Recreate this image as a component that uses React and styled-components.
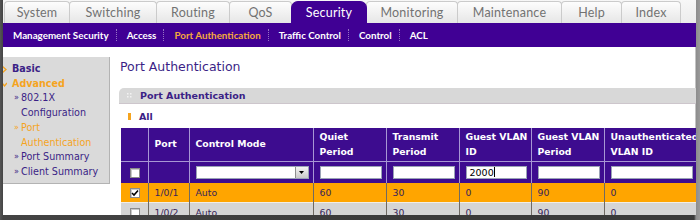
import React from 'react'
import styled, { createGlobalStyle } from 'styled-components'

const Global = createGlobalStyle`
  html, body { margin: 0; padding: 0; background: #fff; }
  #root { width: 700px; height: 220px; }
`

const NAV_PURPLE = '#400094'
const HEAD_PURPLE = '#3d0c8f'
const INK = '#3b1f86'
const ORANGE = '#f5a41f'

const Frame = styled.div`
  width: 700px;
  height: 220px;
  box-sizing: border-box;
  padding: 0 4px 5px 3px;
  background: linear-gradient(to right, #555 0, #444 3px, #3a3a3a 60%, #3a3a3a 694px, #8d8d8d 696px, #9a9a9a 100%);
  overflow: hidden;
`

const Screen = styled.div`
  width: 693px;
  height: 215px;
  background: #fff;
  overflow: hidden;
  display: flex;
  flex-direction: column;
  box-shadow: inset -1px 0 0 #c4c4c4;
`

const TabBar = styled.div`
  height: 23px;
  flex: none;
  display: flex;
  align-items: flex-end;
  padding-left: 1px;
  background: linear-gradient(#f7f7f7, #ececec);
`

const Tab = styled.div`
  width: ${p => p.w}px;
  height: 22px;
  box-sizing: border-box;
  margin-right: -1px;
  display: flex;
  align-items: center;
  justify-content: center;
  font-family: Lato, "Open Sans", sans-serif;
  font-size: 12.5px;
  letter-spacing: 0.2px;
  border: 1px solid ${p => (p.active ? NAV_PURPLE : '#cbcbcb')};
  border-bottom: none;
  border-radius: ${p => (p.active ? '7px 7px 0 0' : '4px 4px 0 0')};
  color: ${p => (p.active ? '#fff' : '#727272')};
  background: ${p => (p.active ? NAV_PURPLE : 'linear-gradient(#fdfdfd, #e6e6e6)')};
  position: relative;
  z-index: ${p => (p.active ? 1 : 0)};
`

const SubNav = styled.div`
  height: 24px;
  flex: none;
  display: flex;
  align-items: center;
  padding-left: 10px;
  background: ${NAV_PURPLE};
`

const NavLink = styled.span`
  font-family: Lato, "Open Sans", sans-serif;
  font-weight: 700;
  font-size: 9.8px;
  color: ${p => (p.current ? '#f7a93c' : '#fff')};
  white-space: nowrap;
`

const NavSep = styled.span`
  width: 0;
  height: 12px;
  border-left: 1px dotted rgba(255, 255, 255, 0.45);
  margin: 0 10px 0 7px;
`

const Body = styled.div`
  flex: 1;
  display: flex;
  min-height: 0;
`

const Sidebar = styled.div`
  width: 107px;
  flex: none;
  align-self: flex-start;
  margin-top: 10px;
  box-sizing: border-box;
  padding: 5px 0 3px;
  background: #dadada;
  border-right: 1px solid #b3b3b3;
  border-bottom: 1px solid #b3b3b3;
  font-family: "DejaVu Sans", Verdana, sans-serif;
  font-size: 9.6px;
  line-height: 14.7px;
`

const SideItem = styled.div`
  display: flex;
  align-items: center;
  padding-left: ${p => p.indent}px;
  color: ${p => (p.tone === 'orange' ? ORANGE : INK)};
  font-weight: ${p => (p.bold ? 700 : 400)};
  white-space: nowrap;
`

const Arrow = styled.svg`
  width: 5px;
  height: 7px;
  margin: 0 5px 0 -1px;
  flex: none;
`

const Bullet = styled.span`
  width: 7px;
  flex: none;
  font-size: 8px;
`

const Main = styled.div`
  flex: 1;
  min-width: 0;
  padding-left: 9px;
  overflow: hidden;
`

const Title = styled.h1`
  margin: 12px 0 0 1px;
  font-family: "DejaVu Sans", Verdana, sans-serif;
  font-weight: 400;
  font-size: 12.5px;
  line-height: 16px;
  color: ${INK};
`

const Panel = styled.div`
  margin-top: 13px;
  overflow: hidden;
`

const PanelHead = styled.div`
  height: 16px;
  display: flex;
  align-items: center;
  padding-left: 8px;
  background: #d8d8d8;
  border-radius: 5px 0 0 0;
  border-bottom: 1px solid #cdc6cc;
  box-sizing: border-box;
  font-family: "DejaVu Sans", Verdana, sans-serif;
  font-weight: 700;
  font-size: 9.5px;
  color: ${INK};
`

const Grip = styled.svg`
  width: 5px;
  height: 5px;
  margin-right: 8px;
  flex: none;
`

const AllRow = styled.div`
  height: 24px;
  display: flex;
  align-items: center;
  padding-left: 9px;
  font-family: "DejaVu Sans", Verdana, sans-serif;
  font-weight: 700;
  font-size: 9.5px;
  color: ${INK};
`

const AllMark = styled.span`
  width: 3px;
  height: 7px;
  background: ${ORANGE};
  margin-right: 8px;
`

const Table = styled.table`
  border-collapse: collapse;
  table-layout: fixed;
  width: 600px;
  margin-left: 2px;
  font-family: "DejaVu Sans", Verdana, sans-serif;
  font-size: 9.3px;
`

const HeadCell = styled.th`
  height: 33px;
  padding: 0 5px 0 6px;
  background: ${HEAD_PURPLE};
  color: #fff;
  font-weight: 700;
  text-align: left;
  line-height: 14.5px;
  border-left: 1px solid #a797d4;
  white-space: nowrap;
  overflow: hidden;
  &:first-child { border-left: none; }
`

const FilterCell = styled.td`
  height: 20px;
  padding: 0 4px 0 6px;
  background: ${HEAD_PURPLE};
  border-left: 1px solid #a797d4;
  border-top: 1px solid #a797d4;
  text-align: ${p => (p.center ? 'center' : 'left')};
  &:first-child { border-left: none; padding: 0 0 0 2px; }
`

const DataRow = styled.tr`
  background: ${p => (p.selected ? '#ffa500' : '#d5d5d5')};
  color: #35245a;
`

const DataCell = styled.td`
  height: 19px;
  padding: 0 4px 0 6px;
  border-left: 1px solid #6f6a63;
  border-top: 1px solid ${p => (p.first ? HEAD_PURPLE : '#f1ede6')};
  text-align: ${p => (p.center ? 'center' : 'left')};
  white-space: nowrap;
  &:first-child { border-left: none; padding: 0 0 0 2px; }
`

const Box = styled.span`
  display: inline-block;
  vertical-align: middle;
  width: 10px;
  height: 10px;
  box-sizing: border-box;
  background: #fff;
  border: 1px solid #8b8b8b;
  box-shadow: inset 1px 1px 0 #c9c9c9;
  position: relative;
`

const Field = styled.div`
  height: 13px;
  width: 100%;
  box-sizing: border-box;
  display: flex;
  align-items: center;
  background: #fff;
  border: 1px solid #9aa3b6;
  padding-left: ${p => (p.text ? 3 : 0)}px;
  font-size: 9.5px;
  color: #000;
`

const DropBtn = styled.span`
  margin-left: auto;
  width: 13px;
  height: 100%;
  box-sizing: border-box;
  display: flex;
  align-items: center;
  justify-content: center;
  background: linear-gradient(#f4f4f4, #c9c9c9);
  border-left: 1px solid #8e8e8e;
`

const Caret = styled.span`
  width: 1px;
  height: 10px;
  background: #000;
`

const Checkbox = ({ checked }) => (
  <Box>
    {checked && (
      <svg width="8" height="8" viewBox="0 0 8 8" style={{ position: 'absolute', left: 0, top: 0 }}>
        <path d="M1 4 L3 6 L7 1.5" fill="none" stroke="#000" strokeWidth="1.6" />
      </svg>
    )}
  </Box>
)

const tabs = [
  ['System', 66],
  ['Switching', 88],
  ['Routing', 74],
  ['QoS', 63],
  ['Security', 76, true],
  ['Monitoring', 92],
  ['Maintenance', 105],
  ['Help', 61],
  ['Index', 60],
]

const links = ['Management Security', 'Access', 'Port Authentication', 'Traffic Control', 'Control', 'ACL']

const cols = [27, 41, 124, 73, 73, 72, 73, 117]

const heads = [
  '',
  'Port',
  'Control Mode',
  ['Quiet', 'Period'],
  ['Transmit', 'Period'],
  ['Guest VLAN', 'ID'],
  ['Guest VLAN', 'Period'],
  ['Unauthenticated', 'VLAN ID'],
]

const rows = [
  { port: '1/0/1', mode: 'Auto', vals: ['60', '30', '0', '90', '0'], selected: true },
  { port: '1/0/2', mode: 'Auto', vals: ['60', '30', '0', '90', '0'] },
]

const RightArrow = () => (
  <Arrow viewBox="0 0 5 7">
    <path d="M0.5 0.5 L4 3.5 L0.5 6.5" fill="none" stroke={ORANGE} strokeWidth="1.4" />
  </Arrow>
)

const DownArrow = () => (
  <Arrow viewBox="0 0 5 7">
    <path d="M0 2 L2.5 5 L5 2" fill="none" stroke={ORANGE} strokeWidth="1.4" />
  </Arrow>
)

export default function App() {
  return (
    <>
      <Global />
      <Frame>
        <Screen>
          <TabBar>
            {tabs.map(([name, w, active]) => (
              <Tab key={name} w={w} active={active}>{name}</Tab>
            ))}
          </TabBar>
          <SubNav>
            {links.map((l, i) => (
              <React.Fragment key={l}>
                {i > 0 && <NavSep />}
                <NavLink current={l === 'Port Authentication'}>{l}</NavLink>
              </React.Fragment>
            ))}
          </SubNav>
          <Body>
            <Sidebar>
              <SideItem indent={0} bold><RightArrow />Basic</SideItem>
              <SideItem indent={0} bold tone="orange"><DownArrow />Advanced</SideItem>
              <SideItem indent={11}><Bullet>»</Bullet>802.1X</SideItem>
              <SideItem indent={18}>Configuration</SideItem>
              <SideItem indent={11} tone="orange"><Bullet>»</Bullet>Port</SideItem>
              <SideItem indent={18} tone="orange">Authentication</SideItem>
              <SideItem indent={11}><Bullet>»</Bullet>Port Summary</SideItem>
              <SideItem indent={11}><Bullet>»</Bullet>Client Summary</SideItem>
            </Sidebar>
            <Main>
              <Title>Port Authentication</Title>
              <Panel>
                <PanelHead>
                  <Grip viewBox="0 0 5 5">
                    <rect x="0" y="0" width="1.5" height="1.5" fill="#f2f2f2" />
                    <rect x="3" y="0" width="1.5" height="1.5" fill="#f2f2f2" />
                    <rect x="0" y="3" width="1.5" height="1.5" fill="#f2f2f2" />
                    <rect x="3" y="3" width="1.5" height="1.5" fill="#f2f2f2" />
                  </Grip>
                  Port Authentication
                </PanelHead>
                <AllRow><AllMark />All</AllRow>
                <Table>
                  <colgroup>
                    {cols.map((w, i) => <col key={i} style={{ width: w }} />)}
                  </colgroup>
                  <thead>
                    <tr>
                      {heads.map((h, i) => (
                        <HeadCell key={i}>
                          {Array.isArray(h) ? <>{h[0]}<br />{h[1]}</> : h}
                        </HeadCell>
                      ))}
                    </tr>
                  </thead>
                  <tbody>
                    <tr>
                      <FilterCell center><Checkbox /></FilterCell>
                      <FilterCell />
                      <FilterCell>
                        <Field>
                          <DropBtn>
                            <svg width="5" height="3" viewBox="0 0 5 3"><path d="M0 0 H5 L2.5 3 Z" fill="#000" /></svg>
                          </DropBtn>
                        </Field>
                      </FilterCell>
                      <FilterCell><Field /></FilterCell>
                      <FilterCell><Field /></FilterCell>
                      <FilterCell><Field text>2000<Caret /></Field></FilterCell>
                      <FilterCell><Field /></FilterCell>
                      <FilterCell style={{ paddingRight: 28 }}><Field /></FilterCell>
                    </tr>
                    {rows.map((r, ri) => (
                      <DataRow key={r.port} selected={r.selected}>
                        <DataCell center first={ri === 0}><Checkbox checked={r.selected} /></DataCell>
                        <DataCell first={ri === 0}>{r.port}</DataCell>
                        <DataCell first={ri === 0}>{r.mode}</DataCell>
                        {r.vals.map((v, i) => (
                          <DataCell key={i} first={ri === 0}>{v}</DataCell>
                        ))}
                      </DataRow>
                    ))}
                  </tbody>
                </Table>
              </Panel>
            </Main>
          </Body>
        </Screen>
      </Frame>
    </>
  )
}
